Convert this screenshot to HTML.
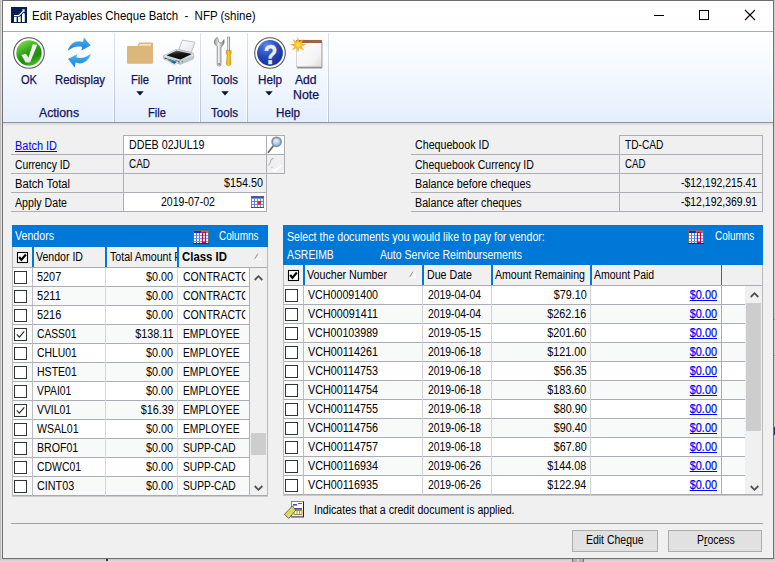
<!DOCTYPE html>
<html lang="en"><head><meta charset="utf-8"><title>Edit Payables Cheque Batch - NFP (shine)</title>
<style>

html,body{margin:0;padding:0;}
body{width:775px;height:562px;overflow:hidden;background:#e4e4e4;font-family:"Liberation Sans",sans-serif;}
#win{position:absolute;left:0;top:0;width:775px;height:562px;overflow:hidden;}
#win div{position:absolute;box-sizing:border-box;}
#win svg{position:absolute;overflow:visible;}
.t{position:absolute;white-space:pre;line-height:1.15;display:block;}

</style></head>
<body>
<div id="win">
<div style="left:0px;top:0px;width:1px;height:562px;background:#bdbdbd;"></div>
<div style="left:1px;top:0px;width:1px;height:562px;background:#e2e2e2;"></div>
<div style="left:774px;top:0px;width:1px;height:562px;background:#cfcfcf;"></div>
<div style="left:0px;top:559px;width:775px;height:3px;background:linear-gradient(180deg,#c4c4c4,#e2e2e2);"></div>
<div style="left:572px;top:559px;width:12px;height:3px;background:#b2b2b2;border-left:1px solid #747474;border-right:1px solid #747474;"></div>
<div style="left:577px;top:559px;width:2px;height:3px;background:#cfcfcf;"></div>
<div style="left:106px;top:559px;width:2px;height:2px;background:#303040;"></div>
<div style="left:774px;top:319px;width:1px;height:1px;background:#9a9a9a;"></div>
<div style="left:774px;top:355px;width:1px;height:1px;background:#9a9a9a;"></div>
<div style="left:774px;top:427px;width:1px;height:8px;background:#3a2060;"></div>
<div style="left:2px;top:0px;width:772px;height:559px;background:#f0f0f0;border:1px solid #6f6f6f;"></div>
<div style="left:3px;top:1px;width:770px;height:30px;background:#ffffff;"></div>
<div style="left:3px;top:31px;width:770px;height:1px;background:#a7abb3;"></div>
<div style="left:3px;top:32px;width:769px;height:90px;background:linear-gradient(180deg,#ffffff 0%,#f6faff 38%,#e4effc 100%);"></div>
<div style="left:772px;top:32px;width:1px;height:90px;background:#ffffff;"></div>
<div style="left:3px;top:122px;width:770px;height:1px;background:#8e949f;"></div>
<div style="left:3px;top:123px;width:770px;height:3px;background:linear-gradient(180deg,#d9d9d9,#f0f0f0);"></div>
<div style="left:113px;top:33px;width:1px;height:89px;background:rgba(255,255,255,.8);"></div>
<div style="left:114px;top:33px;width:1px;height:89px;background:linear-gradient(180deg,#dfe5ee,#b9c4d2);"></div>
<div style="left:199px;top:33px;width:1px;height:89px;background:rgba(255,255,255,.8);"></div>
<div style="left:200px;top:33px;width:1px;height:89px;background:linear-gradient(180deg,#dfe5ee,#b9c4d2);"></div>
<div style="left:246px;top:33px;width:1px;height:89px;background:rgba(255,255,255,.8);"></div>
<div style="left:247px;top:33px;width:1px;height:89px;background:linear-gradient(180deg,#dfe5ee,#b9c4d2);"></div>
<div style="left:327px;top:33px;width:1px;height:89px;background:rgba(255,255,255,.8);"></div>
<div style="left:328px;top:33px;width:1px;height:89px;background:linear-gradient(180deg,#dfe5ee,#b9c4d2);"></div>
<svg style="left:135.5px;top:91px" width="8" height="5" viewBox="0 0 8 5"><path d="M0.3 0.2 L7.7 0.2 L4 4.4 Z" fill="#0e0e3a"/></svg>
<svg style="left:220.5px;top:91px" width="8" height="5" viewBox="0 0 8 5"><path d="M0.3 0.2 L7.7 0.2 L4 4.4 Z" fill="#0e0e3a"/></svg>
<svg style="left:265px;top:91px" width="8" height="5" viewBox="0 0 8 5"><path d="M0.3 0.2 L7.7 0.2 L4 4.4 Z" fill="#0e0e3a"/></svg>
<div style="left:123px;top:135px;width:144px;height:20px;background:#ffffff;"></div>
<div style="left:123px;top:192px;width:144px;height:20px;background:#ffffff;"></div>
<div style="left:267px;top:135px;width:17px;height:19px;background:#ffffff;"></div>
<div style="left:123px;top:135px;width:162px;height:1px;background:#adadb4;"></div>
<div style="left:11px;top:154px;width:274px;height:1px;background:#adadb4;"></div>
<div style="left:11px;top:173px;width:274px;height:1px;background:#adadb4;"></div>
<div style="left:11px;top:192px;width:256px;height:1px;background:#adadb4;"></div>
<div style="left:11px;top:211px;width:256px;height:1px;background:#adadb4;"></div>
<div style="left:123px;top:135px;width:1px;height:77px;background:#adadb4;"></div>
<div style="left:266px;top:135px;width:1px;height:77px;background:#adadb4;"></div>
<div style="left:284px;top:135px;width:1px;height:39px;background:#adadb4;"></div>
<div style="left:619px;top:135px;width:144px;height:1px;background:#adadb4;"></div>
<div style="left:411px;top:154px;width:352px;height:1px;background:#adadb4;"></div>
<div style="left:411px;top:173px;width:352px;height:1px;background:#adadb4;"></div>
<div style="left:411px;top:192px;width:352px;height:1px;background:#adadb4;"></div>
<div style="left:411px;top:211px;width:352px;height:1px;background:#adadb4;"></div>
<div style="left:619px;top:135px;width:1px;height:77px;background:#adadb4;"></div>
<div style="left:762px;top:135px;width:1px;height:77px;background:#adadb4;"></div>
<div style="left:12px;top:225px;width:256px;height:22px;background:#0078d7;"></div>
<div style="left:12px;top:247px;width:256px;height:20px;background:#f0f0f0;"></div>
<svg style="left:193px;top:230px" width="16" height="14" viewBox="0 0 16 14">
<rect x="0" y="0" width="16" height="14" fill="#6a6a6a"/>
<rect x="1" y="1" width="14" height="12" fill="#ffffff"/>
<rect x="1" y="1" width="7" height="2" fill="#1030d0"/>
<rect x="8" y="1" width="7" height="2" fill="#808080"/>
<g stroke="#3f6fe0" stroke-width="1">
<path d="M3.5 3V13M6.5 3V13M9.5 3V13M12.5 3V13" />
<path d="M1 5.5H15M1 8.5H15M1 11.5H15" stroke="#6f9af0"/>
</g>
<rect x="9.5" y="2.5" width="3" height="10" fill="none" stroke="#d4004c" stroke-width="1.2"/>
<rect x="0" y="13" width="16" height="1" fill="#303030"/>
</svg>
<div style="left:12px;top:268px;width:237px;height:18px;background:#ffffff;"></div>
<div style="left:12px;top:267px;width:238px;height:1px;background:#acacb6;"></div>
<svg style="left:14px;top:271px" width="13" height="13" viewBox="0 0 13 13"><rect x="0.5" y="0.5" width="12" height="12" fill="#fff" stroke="#333" stroke-width="1"/></svg>
<div style="left:12px;top:287px;width:237px;height:18px;background:#f8f9f9;"></div>
<div style="left:12px;top:286px;width:238px;height:1px;background:#acacb6;"></div>
<svg style="left:14px;top:290px" width="13" height="13" viewBox="0 0 13 13"><rect x="0.5" y="0.5" width="12" height="12" fill="#fff" stroke="#333" stroke-width="1"/></svg>
<div style="left:12px;top:306px;width:237px;height:18px;background:#ffffff;"></div>
<div style="left:12px;top:305px;width:238px;height:1px;background:#acacb6;"></div>
<svg style="left:14px;top:309px" width="13" height="13" viewBox="0 0 13 13"><rect x="0.5" y="0.5" width="12" height="12" fill="#fff" stroke="#333" stroke-width="1"/></svg>
<div style="left:12px;top:325px;width:237px;height:18px;background:#f8f9f9;"></div>
<div style="left:12px;top:324px;width:238px;height:1px;background:#acacb6;"></div>
<svg style="left:14px;top:328px" width="13" height="13" viewBox="0 0 13 13"><rect x="0.5" y="0.5" width="12" height="12" fill="#fff" stroke="#333" stroke-width="1"/><path d="M2.8 6.4 L5.3 9.2 L10.3 3.4" fill="none" stroke="#222" stroke-width="1.1"/></svg>
<div style="left:12px;top:344px;width:237px;height:18px;background:#ffffff;"></div>
<div style="left:12px;top:343px;width:238px;height:1px;background:#acacb6;"></div>
<svg style="left:14px;top:347px" width="13" height="13" viewBox="0 0 13 13"><rect x="0.5" y="0.5" width="12" height="12" fill="#fff" stroke="#333" stroke-width="1"/></svg>
<div style="left:12px;top:363px;width:237px;height:18px;background:#f8f9f9;"></div>
<div style="left:12px;top:362px;width:238px;height:1px;background:#acacb6;"></div>
<svg style="left:14px;top:366px" width="13" height="13" viewBox="0 0 13 13"><rect x="0.5" y="0.5" width="12" height="12" fill="#fff" stroke="#333" stroke-width="1"/></svg>
<div style="left:12px;top:382px;width:237px;height:18px;background:#ffffff;"></div>
<div style="left:12px;top:381px;width:238px;height:1px;background:#acacb6;"></div>
<svg style="left:14px;top:385px" width="13" height="13" viewBox="0 0 13 13"><rect x="0.5" y="0.5" width="12" height="12" fill="#fff" stroke="#333" stroke-width="1"/></svg>
<div style="left:12px;top:401px;width:237px;height:18px;background:#f8f9f9;"></div>
<div style="left:12px;top:400px;width:238px;height:1px;background:#acacb6;"></div>
<svg style="left:14px;top:404px" width="13" height="13" viewBox="0 0 13 13"><rect x="0.5" y="0.5" width="12" height="12" fill="#fff" stroke="#333" stroke-width="1"/><path d="M2.8 6.4 L5.3 9.2 L10.3 3.4" fill="none" stroke="#222" stroke-width="1.1"/></svg>
<div style="left:12px;top:420px;width:237px;height:18px;background:#ffffff;"></div>
<div style="left:12px;top:419px;width:238px;height:1px;background:#acacb6;"></div>
<svg style="left:14px;top:423px" width="13" height="13" viewBox="0 0 13 13"><rect x="0.5" y="0.5" width="12" height="12" fill="#fff" stroke="#333" stroke-width="1"/></svg>
<div style="left:12px;top:439px;width:237px;height:18px;background:#f8f9f9;"></div>
<div style="left:12px;top:438px;width:238px;height:1px;background:#acacb6;"></div>
<svg style="left:14px;top:442px" width="13" height="13" viewBox="0 0 13 13"><rect x="0.5" y="0.5" width="12" height="12" fill="#fff" stroke="#333" stroke-width="1"/></svg>
<div style="left:12px;top:458px;width:237px;height:18px;background:#ffffff;"></div>
<div style="left:12px;top:457px;width:238px;height:1px;background:#acacb6;"></div>
<svg style="left:14px;top:461px" width="13" height="13" viewBox="0 0 13 13"><rect x="0.5" y="0.5" width="12" height="12" fill="#fff" stroke="#333" stroke-width="1"/></svg>
<div style="left:12px;top:477px;width:237px;height:18px;background:#f8f9f9;"></div>
<div style="left:12px;top:476px;width:238px;height:1px;background:#acacb6;"></div>
<svg style="left:14px;top:480px" width="13" height="13" viewBox="0 0 13 13"><rect x="0.5" y="0.5" width="12" height="12" fill="#fff" stroke="#333" stroke-width="1"/></svg>
<div style="left:12px;top:495px;width:256px;height:1px;background:#a9a9b0;"></div>
<div style="left:12px;top:496px;width:256px;height:1px;background:#c9c9ce;"></div>
<div style="left:12px;top:247px;width:1px;height:249px;background:#b9b9be;"></div>
<div style="left:32px;top:267px;width:1px;height:229px;background:#bcbcc2;"></div>
<div style="left:105px;top:267px;width:1px;height:229px;background:#d6d6da;"></div>
<div style="left:177px;top:267px;width:1px;height:229px;background:#d6d6da;"></div>
<div style="left:249px;top:267px;width:1px;height:229px;background:#b0b0b6;"></div>
<div style="left:267px;top:247px;width:1px;height:249px;background:#b9b9be;"></div>
<div style="left:12px;top:267px;width:256px;height:1px;background:#acacb6;"></div>
<div style="left:32px;top:247px;width:2px;height:20px;background:#0078d7;"></div>
<div style="left:105px;top:247px;width:2px;height:20px;background:#0078d7;"></div>
<div style="left:177px;top:247px;width:2px;height:20px;background:#0078d7;"></div>
<svg style="left:17px;top:252px" width="11" height="11" viewBox="0 0 11 11"><rect x="0.5" y="0.5" width="10" height="10" fill="#fff" stroke="#000" stroke-width="1.1"/><path d="M2.1 5 L4.4 7.7 L8.9 2.5" fill="none" stroke="#000" stroke-width="2.2"/></svg>
<svg style="left:254px;top:253px" width="8" height="7" viewBox="0 0 9 8"><path d="M0.6 7.2 L4.4 0.6" stroke="#8c8c8c" stroke-width="1.1" fill="none"/><path d="M4.4 0.6 L8.2 7.2 L0.6 7.2" stroke="#ffffff" stroke-width="1.1" fill="none"/></svg>
<div style="left:250px;top:268px;width:17px;height:227px;background:#f0f0f0;"></div>
<svg style="left:254px;top:275px" width="9" height="6" viewBox="0 0 9 6"><path d="M0.7 5 L4.5 1.2 L8.3 5" stroke="#505050" stroke-width="1.8" fill="none"/></svg>
<svg style="left:254px;top:485px" width="9" height="6" viewBox="0 0 9 6"><path d="M0.7 1 L4.5 4.8 L8.3 1" stroke="#505050" stroke-width="1.8" fill="none"/></svg>
<div style="left:251px;top:433px;width:15px;height:22px;background:#cdcdcd;"></div>
<div style="left:283px;top:225px;width:480px;height:40px;background:#0078d7;"></div>
<div style="left:283px;top:265px;width:480px;height:20px;background:#f0f0f0;"></div>
<svg style="left:688px;top:230px" width="16" height="14" viewBox="0 0 16 14">
<rect x="0" y="0" width="16" height="14" fill="#6a6a6a"/>
<rect x="1" y="1" width="14" height="12" fill="#ffffff"/>
<rect x="1" y="1" width="7" height="2" fill="#1030d0"/>
<rect x="8" y="1" width="7" height="2" fill="#808080"/>
<g stroke="#3f6fe0" stroke-width="1">
<path d="M3.5 3V13M6.5 3V13M9.5 3V13M12.5 3V13" />
<path d="M1 5.5H15M1 8.5H15M1 11.5H15" stroke="#6f9af0"/>
</g>
<rect x="9.5" y="2.5" width="3" height="10" fill="none" stroke="#d4004c" stroke-width="1.2"/>
<rect x="0" y="13" width="16" height="1" fill="#303030"/>
</svg>
<div style="left:283px;top:286px;width:462px;height:18px;background:#ffffff;"></div>
<div style="left:283px;top:285px;width:462px;height:1px;background:#acacb6;"></div>
<svg style="left:285px;top:289px" width="13" height="13" viewBox="0 0 13 13"><rect x="0.5" y="0.5" width="12" height="12" fill="#fff" stroke="#333" stroke-width="1"/></svg>
<div style="left:283px;top:305px;width:462px;height:18px;background:#f8f9f9;"></div>
<div style="left:283px;top:304px;width:462px;height:1px;background:#acacb6;"></div>
<svg style="left:285px;top:308px" width="13" height="13" viewBox="0 0 13 13"><rect x="0.5" y="0.5" width="12" height="12" fill="#fff" stroke="#333" stroke-width="1"/></svg>
<div style="left:283px;top:324px;width:462px;height:18px;background:#ffffff;"></div>
<div style="left:283px;top:323px;width:462px;height:1px;background:#acacb6;"></div>
<svg style="left:285px;top:327px" width="13" height="13" viewBox="0 0 13 13"><rect x="0.5" y="0.5" width="12" height="12" fill="#fff" stroke="#333" stroke-width="1"/></svg>
<div style="left:283px;top:343px;width:462px;height:18px;background:#f8f9f9;"></div>
<div style="left:283px;top:342px;width:462px;height:1px;background:#acacb6;"></div>
<svg style="left:285px;top:346px" width="13" height="13" viewBox="0 0 13 13"><rect x="0.5" y="0.5" width="12" height="12" fill="#fff" stroke="#333" stroke-width="1"/></svg>
<div style="left:283px;top:362px;width:462px;height:18px;background:#ffffff;"></div>
<div style="left:283px;top:361px;width:462px;height:1px;background:#acacb6;"></div>
<svg style="left:285px;top:365px" width="13" height="13" viewBox="0 0 13 13"><rect x="0.5" y="0.5" width="12" height="12" fill="#fff" stroke="#333" stroke-width="1"/></svg>
<div style="left:283px;top:381px;width:462px;height:18px;background:#f8f9f9;"></div>
<div style="left:283px;top:380px;width:462px;height:1px;background:#acacb6;"></div>
<svg style="left:285px;top:384px" width="13" height="13" viewBox="0 0 13 13"><rect x="0.5" y="0.5" width="12" height="12" fill="#fff" stroke="#333" stroke-width="1"/></svg>
<div style="left:283px;top:400px;width:462px;height:18px;background:#ffffff;"></div>
<div style="left:283px;top:399px;width:462px;height:1px;background:#acacb6;"></div>
<svg style="left:285px;top:403px" width="13" height="13" viewBox="0 0 13 13"><rect x="0.5" y="0.5" width="12" height="12" fill="#fff" stroke="#333" stroke-width="1"/></svg>
<div style="left:283px;top:419px;width:462px;height:18px;background:#f8f9f9;"></div>
<div style="left:283px;top:418px;width:462px;height:1px;background:#acacb6;"></div>
<svg style="left:285px;top:422px" width="13" height="13" viewBox="0 0 13 13"><rect x="0.5" y="0.5" width="12" height="12" fill="#fff" stroke="#333" stroke-width="1"/></svg>
<div style="left:283px;top:438px;width:462px;height:18px;background:#ffffff;"></div>
<div style="left:283px;top:437px;width:462px;height:1px;background:#acacb6;"></div>
<svg style="left:285px;top:441px" width="13" height="13" viewBox="0 0 13 13"><rect x="0.5" y="0.5" width="12" height="12" fill="#fff" stroke="#333" stroke-width="1"/></svg>
<div style="left:283px;top:457px;width:462px;height:18px;background:#f8f9f9;"></div>
<div style="left:283px;top:456px;width:462px;height:1px;background:#acacb6;"></div>
<svg style="left:285px;top:460px" width="13" height="13" viewBox="0 0 13 13"><rect x="0.5" y="0.5" width="12" height="12" fill="#fff" stroke="#333" stroke-width="1"/></svg>
<div style="left:283px;top:476px;width:462px;height:18px;background:#ffffff;"></div>
<div style="left:283px;top:475px;width:462px;height:1px;background:#acacb6;"></div>
<svg style="left:285px;top:479px" width="13" height="13" viewBox="0 0 13 13"><rect x="0.5" y="0.5" width="12" height="12" fill="#fff" stroke="#333" stroke-width="1"/></svg>
<div style="left:283px;top:494px;width:480px;height:1px;background:#a9a9b0;"></div>
<div style="left:283px;top:495px;width:480px;height:1px;background:#c9c9ce;"></div>
<div style="left:283px;top:265px;width:1px;height:230px;background:#b9b9be;"></div>
<div style="left:303px;top:285px;width:1px;height:210px;background:#bcbcc2;"></div>
<div style="left:422px;top:285px;width:1px;height:210px;background:#d0d0d5;"></div>
<div style="left:491px;top:285px;width:1px;height:210px;background:#d0d0d5;"></div>
<div style="left:590px;top:285px;width:1px;height:210px;background:#d0d0d5;"></div>
<div style="left:721px;top:285px;width:1px;height:210px;background:#acacb6;"></div>
<div style="left:762px;top:265px;width:1px;height:230px;background:#b9b9be;"></div>
<div style="left:283px;top:285px;width:480px;height:1px;background:#acacb6;"></div>
<div style="left:303px;top:265px;width:2px;height:20px;background:#0078d7;"></div>
<div style="left:422px;top:265px;width:2px;height:20px;background:#0078d7;"></div>
<div style="left:491px;top:265px;width:2px;height:20px;background:#0078d7;"></div>
<div style="left:590px;top:265px;width:2px;height:20px;background:#0078d7;"></div>
<div style="left:721px;top:265px;width:1px;height:20px;background:#0078d7;"></div>
<svg style="left:288px;top:270px" width="11" height="11" viewBox="0 0 11 11"><rect x="0.5" y="0.5" width="10" height="10" fill="#fff" stroke="#000" stroke-width="1.1"/><path d="M2.1 5 L4.4 7.7 L8.9 2.5" fill="none" stroke="#000" stroke-width="2.2"/></svg>
<svg style="left:409px;top:271px" width="8" height="7" viewBox="0 0 9 8"><path d="M0.6 7.2 L4.4 0.6" stroke="#8c8c8c" stroke-width="1.1" fill="none"/><path d="M4.4 0.6 L8.2 7.2 L0.6 7.2" stroke="#ffffff" stroke-width="1.1" fill="none"/></svg>
<div style="left:746px;top:286px;width:16px;height:208px;background:#f0f0f0;"></div>
<svg style="left:750px;top:292px" width="9" height="6" viewBox="0 0 9 6"><path d="M0.7 5 L4.5 1.2 L8.3 5" stroke="#505050" stroke-width="1.8" fill="none"/></svg>
<svg style="left:750px;top:485px" width="9" height="6" viewBox="0 0 9 6"><path d="M0.7 1 L4.5 4.8 L8.3 1" stroke="#505050" stroke-width="1.8" fill="none"/></svg>
<div style="left:746px;top:303px;width:15px;height:128px;background:#cdcdcd;"></div>
<div style="left:11px;top:523px;width:752px;height:1px;background:#a0a0a0;"></div>
<div style="left:572px;top:530px;width:86px;height:22px;background:#e1e1e1;border:1px solid #adadad;"></div>
<div style="left:668px;top:530px;width:94px;height:22px;background:#e1e1e1;border:1px solid #adadad;"></div>
<svg style="left:11px;top:7px" width="16" height="16" viewBox="0 0 16 16">
<rect width="16" height="16" fill="#002050"/>
<rect x="3" y="9.8" width="2.6" height="5.2" fill="#fff"/>
<rect x="7" y="9" width="2.7" height="6" fill="#fff"/>
<rect x="11" y="5" width="2.8" height="10" fill="#fff"/>
<path d="M3 8.6 H7.7 L13 3.3" fill="none" stroke="#002050" stroke-width="3"/>
<path d="M10.2 2 L14.2 1.8 L14 5.8 Z" fill="#002050" stroke="#002050" stroke-width="1.4"/>
<path d="M3 8.6 H7.7 L12.8 3.5" fill="none" stroke="#fff" stroke-width="1.1"/>
<path d="M10.8 2.5 L13.7 2.3 L13.5 5.2 Z" fill="#fff"/>
</svg>
<svg style="left:650px;top:5px" width="110" height="22" viewBox="0 0 110 22">
<path d="M4 10.5 H14" stroke="#000" stroke-width="1"/>
<rect x="49.5" y="5.5" width="9" height="9" fill="none" stroke="#000" stroke-width="1"/>
<path d="M95 5 L105 15 M105 5 L95 15" stroke="#000" stroke-width="1.1"/>
</svg>
<svg style="left:13px;top:37px" width="32" height="32" viewBox="0 0 32 32">
<defs>
<linearGradient id="gok" x1="0.2" y1="0" x2="0.75" y2="1"><stop offset="0" stop-color="#7ede50"/><stop offset="0.5" stop-color="#2a9a12"/><stop offset="0.72" stop-color="#1f8c0c"/><stop offset="1" stop-color="#4fd024"/></linearGradient>
<linearGradient id="gck" x1="0" y1="0" x2="0" y2="1"><stop offset="0" stop-color="#ffffff"/><stop offset="1" stop-color="#e4e4e4"/></linearGradient>
</defs>
<circle cx="16" cy="16" r="15.3" fill="#fff" stroke="#555" stroke-width="1.1"/>
<circle cx="16" cy="16" r="12.7" fill="url(#gok)"/>
<path d="M8.4 18 L13 16.8 L15.4 20.8 L19.8 7.2 L24.2 7.8 L17.2 25.4 L12.6 25.4 Z" fill="url(#gck)"/>
</svg>
<svg style="left:67px;top:37px" width="25" height="32" viewBox="0 0 25 32">
<defs><linearGradient id="grd" x1="0" y1="0" x2="0" y2="1"><stop offset="0" stop-color="#55b4f2"/><stop offset="1" stop-color="#1580d8"/></linearGradient></defs>
<path d="M0.8 13.8 C3 5.5 10.5 2.6 16 5 L16.8 0.2 L23.6 8.6 L14.4 13.4 L15.2 10 C10.5 8.8 5.5 10 0.8 13.8 Z" fill="url(#grd)"/>
<path d="M23.8 16.8 C21.6 25.1 14.1 28 8.6 25.6 L7.8 30.4 L1 22 L10.2 17.2 L9.4 20.6 C14.1 21.8 19.1 20.6 23.8 16.8 Z" fill="url(#grd)"/>
</svg>
<svg style="left:127px;top:42px" width="26" height="22" viewBox="0 0 26 22">
<path d="M0.6 4 H10.4 L12 0.5 H25.4 Q26 0.5 26 1.2 V21 Q26 21.8 25.3 21.8 H0.7 Q0 21.8 0 21 V4.6 Q0 4 0.6 4 Z" fill="#dcb67a"/>
<path d="M12.4 2.2 H24 V3.4 H11.8 Z" fill="#fdf6ea"/>
</svg>
<svg style="left:163px;top:39px" width="33" height="27" viewBox="0 0 33 27">
<defs>
<linearGradient id="gp1" x1="0" y1="0" x2="1" y2="1"><stop offset="0" stop-color="#ffffff"/><stop offset="1" stop-color="#dfe3e7"/></linearGradient>
<linearGradient id="gp2" x1="0" y1="0" x2="0.3" y2="1"><stop offset="0" stop-color="#7c8186"/><stop offset="0.45" stop-color="#1a1c1e"/><stop offset="1" stop-color="#000"/></linearGradient>
<linearGradient id="gp3" x1="0" y1="0" x2="1" y2="0.4"><stop offset="0" stop-color="#3b8df0"/><stop offset="0.5" stop-color="#2f9a78"/><stop offset="1" stop-color="#1c48b8"/></linearGradient>
<linearGradient id="gp4" x1="0" y1="0" x2="0" y2="1"><stop offset="0" stop-color="#f8f9fa"/><stop offset="1" stop-color="#b9bec4"/></linearGradient>
</defs>
<path d="M19.4 1.2 L32 3.2 L28.2 13.8 L15.8 10.4 Z" fill="url(#gp1)" stroke="#a4aab0" stroke-width="0.7"/>
<path d="M0.2 17 L13 10.4 L30.2 14 L30.9 17.2 L30.2 19.9 L17.4 25.2 L1.2 20.5 Z" fill="url(#gp4)" stroke="#9aa0a6" stroke-width="0.6"/>
<path d="M3.6 16.5 L13.4 11.4 L28.9 14.9 L17.4 20.5 Z" fill="url(#gp2)"/>
<path d="M17.4 21.6 L30.8 16.8 L30.2 19.9 L17.4 25.2 Z" fill="#c3c8cd"/>
<path d="M1.6 18.5 L16.4 22.3 L16.4 24 L1.8 20 Z" fill="#33383d"/>
<path d="M1.8 20.4 L6.6 18.9 L16 23.2 L11.4 26.2 Z" fill="#f4f6f8" stroke="#b4b9be" stroke-width="0.5"/>
<path d="M3.6 20.6 L6.8 19.7 L14 23.1 L11.2 24.9 Z" fill="url(#gp3)"/>
<circle cx="19.4" cy="22.6" r="0.8" fill="#4cb848"/>
</svg>
<svg style="left:213px;top:36px" width="20" height="32" viewBox="0 0 20 32">
<defs>
<linearGradient id="gw" x1="0" y1="0" x2="1" y2="0"><stop offset="0" stop-color="#8a8a8a"/><stop offset="0.45" stop-color="#f2f2f2"/><stop offset="1" stop-color="#777"/></linearGradient>
<linearGradient id="gh" x1="0" y1="0" x2="1" y2="0"><stop offset="0" stop-color="#c98a00"/><stop offset="0.4" stop-color="#ffd21a"/><stop offset="1" stop-color="#d89a00"/></linearGradient>
</defs>
<path d="M4.2 1.4 C2 2.6 0.8 5 1.4 7.6 L4.2 10.6 L4.2 28.4 C4.2 30.6 8 30.6 8 28.4 L8 10.8 C10.6 9.4 11.6 6.6 11 3.6 L8.4 7.2 L5.6 6 L5.2 3.2 Z" fill="url(#gw)" stroke="#6a6a6a" stroke-width="0.6"/>
<circle cx="6.1" cy="28" r="0.9" fill="#707070"/>
<rect x="14.6" y="1" width="2.2" height="14" fill="url(#gw)" stroke="#777" stroke-width="0.4"/>
<path d="M13.2 14.6 H18.2 V17.6 L17.3 19 L18 27.6 C18 30.4 13.4 30.4 13.4 27.6 L14.1 19 L13.2 17.6 Z" fill="url(#gh)" stroke="#b87c00" stroke-width="0.4"/>
</svg>
<svg style="left:254px;top:37px" width="32" height="32" viewBox="0 0 32 32">
<defs><radialGradient id="ghl" cx="0.35" cy="0.2" r="0.95"><stop offset="0" stop-color="#5b84e6"/><stop offset="0.5" stop-color="#2446b8"/><stop offset="1" stop-color="#122a8c"/></radialGradient></defs>
<circle cx="16" cy="16" r="15.3" fill="#fff" stroke="#555" stroke-width="1.1"/>
<circle cx="16" cy="16" r="12.9" fill="url(#ghl)"/>
<text transform="translate(16.5,26.6) scale(0.78,1)" x="0" y="0" text-anchor="middle" font-family="Liberation Sans, sans-serif" font-weight="bold" font-size="28.5" fill="#eeeeee" stroke="#eeeeee" stroke-width="0.5">?</text>
</svg>
<svg style="left:290px;top:37px" width="33" height="32" viewBox="0 0 33 32">
<defs>
<linearGradient id="gn" x1="0" y1="0" x2="1" y2="1"><stop offset="0" stop-color="#ffffff"/><stop offset="0.7" stop-color="#f4f4f4"/><stop offset="1" stop-color="#dcdcdc"/></linearGradient>
<radialGradient id="gs" cx="0.5" cy="0.5" r="0.5"><stop offset="0" stop-color="#ffe680"/><stop offset="0.45" stop-color="#fdb813"/><stop offset="1" stop-color="#f59a00"/></radialGradient>
</defs>
<rect x="7" y="4" width="25.4" height="27.6" rx="1" fill="#8f8f8f"/>
<rect x="6.6" y="3.2" width="25" height="26.6" fill="url(#gn)" stroke="#b9b9b9" stroke-width="0.6"/>
<path d="M6.4 3 H31.2 Q32 3 32 4 V6 H6.4 Z" fill="#9c6248"/>
<path d="M8 0 L9.3 4.9 L13.4 2 L11.4 6.6 L16.2 7.4 L11.6 9.2 L13.8 13.6 L9.4 10.8 L8 15.6 L6.6 10.8 L2.2 13.6 L4.4 9.2 L-0.2 7.4 L4.6 6.6 L2.6 2 L6.7 4.9 Z" fill="url(#gs)"/>
</svg>
<svg style="left:267px;top:136px" width="17" height="18" viewBox="0 0 17 18">
<defs><radialGradient id="gm" cx="0.4" cy="0.35" r="0.7"><stop offset="0" stop-color="#e8f4ff"/><stop offset="1" stop-color="#7db4e8"/></radialGradient></defs>
<path d="M1.4 16.2 L6.4 9.8" stroke="#6a6a6a" stroke-width="1.8" stroke-linecap="round"/>
<circle cx="9.6" cy="5.8" r="4.5" fill="url(#gm)" stroke="#8a9098" stroke-width="1.7"/>
</svg>
<svg style="left:267px;top:155px" width="17" height="18" viewBox="0 0 17 18">
<path d="M6.6 3.4 C4 3.6 3.6 6 3.4 7.4 C2.4 8 1.6 9 1.8 10.8" fill="none" stroke="#b4b4b4" stroke-width="1.1"/>
<path d="M5.4 14.6 L8 15.6 L14.4 10.6" fill="none" stroke="#ffffff" stroke-width="1.4"/>
<circle cx="5" cy="12.4" r="0.6" fill="#aaa"/>
</svg>
<svg style="left:251px;top:196px" width="13" height="12" viewBox="0 0 13 12">
<rect width="13" height="12" fill="#ffffff"/>
<rect width="13" height="2.6" fill="#4456b4"/>
<g stroke="#6c7fd6" stroke-width="1"><path d="M0.5 2V12M3.5 2V12M6.5 2V12M9.5 2V12M12.5 2V12"/><path d="M0 5.5H13M0 8.5H13M0 11.5H13"/></g>
<rect x="6.8" y="5" width="3" height="3.4" fill="#e03010"/>
<rect x="0" y="11" width="13" height="1" fill="#3a4aa0"/>
</svg>
<svg style="left:284px;top:500px" width="21" height="19" viewBox="0 0 21 19">
<rect x="7.5" y="1.5" width="12" height="15.4" fill="#fffff2" stroke="#2a1060" stroke-width="1"/>
<path d="M7.5 17 V1.5 H19.5" fill="none" stroke="#888" stroke-width="1"/>
<rect x="9" y="4" width="4" height="1.6" fill="#4848d0"/>
<rect x="14" y="3" width="4" height="0.9" fill="#4848d0"/>
<rect x="9" y="8" width="9" height="1.8" fill="#4848d0"/>
<rect x="10" y="10.4" width="8" height="4" fill="#fff" stroke="#8a8a20" stroke-width="0.9"/>
<path d="M13 10.4V14.4M15.6 10.4V14.4" stroke="#8a8a20" stroke-width="0.9"/>
<path d="M11 15.6 H18.4 V10" fill="none" stroke="#f0e800" stroke-width="1" stroke-dasharray="1.2 1"/>
<path d="M0.4 14.4 L8.6 5.8 L11.6 10.4 L4.8 18.4 Z" fill="#dede6a" stroke="#3a3a1a" stroke-width="0.7"/>
<path d="M3.4 14.6 L9.2 8.4" stroke="#9a9ab8" stroke-width="0.8" stroke-dasharray="1 1"/>
</svg>
<span class="t" id="t0" style="top:74.00px;font-size:12px;color:#12125c;left:21.00px;transform-origin:0 50%;transform:scaleX(0.9225);-webkit-text-stroke:0.25px #12125c;">OK</span>
<span class="t" id="t1" style="top:74.00px;font-size:12px;color:#12125c;left:55.00px;transform-origin:0 50%;transform:scaleX(0.9487);-webkit-text-stroke:0.25px #12125c;">Redisplay</span>
<span class="t" id="t2" style="top:74.00px;font-size:12px;color:#12125c;left:131.00px;transform-origin:0 50%;transform:scaleX(0.9305);-webkit-text-stroke:0.25px #12125c;">File</span>
<span class="t" id="t3" style="top:74.00px;font-size:12px;color:#12125c;left:166.60px;transform-origin:0 50%;transform:scaleX(0.9884);-webkit-text-stroke:0.25px #12125c;">Print</span>
<span class="t" id="t4" style="top:74.00px;font-size:12px;color:#12125c;left:211.00px;transform-origin:0 50%;transform:scaleX(0.9637);-webkit-text-stroke:0.25px #12125c;">Tools</span>
<span class="t" id="t5" style="top:74.00px;font-size:12px;color:#12125c;left:257.60px;transform-origin:0 50%;transform:scaleX(0.9722);-webkit-text-stroke:0.25px #12125c;">Help</span>
<span class="t" id="t6" style="top:74.00px;font-size:12px;color:#12125c;left:295.00px;transform-origin:0 50%;transform:scaleX(1.0113);-webkit-text-stroke:0.25px #12125c;">Add</span>
<span class="t" id="t7" style="top:88.60px;font-size:12px;color:#12125c;left:293.00px;transform-origin:0 50%;transform:scaleX(1.0253);-webkit-text-stroke:0.25px #12125c;">Note</span>
<span class="t" id="t8" style="top:106.60px;font-size:12px;color:#12125c;left:39.00px;transform-origin:0 50%;transform:scaleX(1.0163);-webkit-text-stroke:0.25px #12125c;">Actions</span>
<span class="t" id="t9" style="top:106.60px;font-size:12px;color:#12125c;left:148.00px;transform-origin:0 50%;transform:scaleX(0.9305);-webkit-text-stroke:0.25px #12125c;">File</span>
<span class="t" id="t10" style="top:106.60px;font-size:12px;color:#12125c;left:211.00px;transform-origin:0 50%;transform:scaleX(0.9637);-webkit-text-stroke:0.25px #12125c;">Tools</span>
<span class="t" id="t11" style="top:106.60px;font-size:12px;color:#12125c;left:275.60px;transform-origin:0 50%;transform:scaleX(0.9722);-webkit-text-stroke:0.25px #12125c;">Help</span>
<span class="t" id="t12" style="top:10.00px;font-size:12px;color:#000;left:32.40px;transform-origin:0 50%;transform:scaleX(0.9559);">Edit Payables Cheque Batch  -  NFP (shine)</span>
<span class="t" id="t13" style="top:140.00px;font-size:12px;color:#0000ff;text-decoration:underline;left:15.00px;transform-origin:0 50%;transform:scaleX(0.9124);">Batch ID</span>
<span class="t" id="t14" style="top:159.00px;font-size:12px;color:#000;left:15.00px;transform-origin:0 50%;transform:scaleX(0.8592);">Currency ID</span>
<span class="t" id="t15" style="top:177.80px;font-size:12px;color:#000;left:15.00px;transform-origin:0 50%;transform:scaleX(0.9297);">Batch Total</span>
<span class="t" id="t16" style="top:196.90px;font-size:12px;color:#000;left:15.00px;transform-origin:0 50%;transform:scaleX(0.8858);">Apply Date</span>
<span class="t" id="t17" style="top:139.00px;font-size:12px;color:#000;left:128.50px;transform-origin:0 50%;transform:scaleX(0.8912);">DDEB 02JUL19</span>
<span class="t" id="t18" style="top:158.00px;font-size:12px;color:#000;left:128.50px;transform-origin:0 50%;transform:scaleX(0.8247);">CAD</span>
<span class="t" id="t19" style="top:177.00px;font-size:12px;color:#000;left:223.70px;transform-origin:0 50%;transform:scaleX(0.8988);">$154.50</span>
<span class="t" id="t20" style="top:196.00px;font-size:12px;color:#000;left:160.50px;transform-origin:0 50%;transform:scaleX(0.8780);">2019-07-02</span>
<span class="t" id="t21" style="top:139.00px;font-size:12px;color:#000;left:415.40px;transform-origin:0 50%;transform:scaleX(0.8886);">Chequebook ID</span>
<span class="t" id="t22" style="top:158.60px;font-size:12px;color:#000;left:415.40px;transform-origin:0 50%;transform:scaleX(0.8781);">Chequebook Currency ID</span>
<span class="t" id="t23" style="top:177.80px;font-size:12px;color:#000;left:415.40px;transform-origin:0 50%;transform:scaleX(0.8946);">Balance before cheques</span>
<span class="t" id="t24" style="top:196.60px;font-size:12px;color:#000;left:415.40px;transform-origin:0 50%;transform:scaleX(0.8926);">Balance after cheques</span>
<span class="t" id="t25" style="top:139.00px;font-size:12px;color:#000;left:624.80px;transform-origin:0 50%;transform:scaleX(0.8472);">TD-CAD</span>
<span class="t" id="t26" style="top:158.00px;font-size:12px;color:#000;left:624.80px;transform-origin:0 50%;transform:scaleX(0.8049);">CAD</span>
<span class="t" id="t27" style="top:177.00px;font-size:12px;color:#000;left:680.80px;transform-origin:0 50%;transform:scaleX(0.8716);">-$12,192,215.41</span>
<span class="t" id="t28" style="top:196.00px;font-size:12px;color:#000;left:680.80px;transform-origin:0 50%;transform:scaleX(0.8716);">-$12,192,369.91</span>
<span class="t" id="t29" style="top:229.60px;font-size:12px;color:#fff;left:15.00px;transform-origin:0 50%;transform:scaleX(0.8854);">Vendors</span>
<span class="t" id="t30" style="top:229.60px;font-size:12px;color:#fff;left:219.40px;transform-origin:0 50%;transform:scaleX(0.8362);">Columns</span>
<span class="t" id="t31" style="top:270.50px;font-size:12px;color:#000;left:37.20px;transform-origin:0 50%;transform:scaleX(0.9063);">5207</span>
<span class="t" id="t32" style="top:270.50px;font-size:12px;color:#000;right:601.60px;transform-origin:100% 50%;transform:scaleX(0.9000);">$0.00</span>
<span class="t" id="t33" style="top:270.50px;font-size:12px;color:#000;left:182.60px;transform-origin:0 50%;transform:scaleX(0.8780);max-width:71.1px;overflow:hidden;">CONTRACTOR</span>
<span class="t" id="t34" style="top:289.50px;font-size:12px;color:#000;left:37.20px;transform-origin:0 50%;transform:scaleX(0.9220);">5211</span>
<span class="t" id="t35" style="top:289.50px;font-size:12px;color:#000;right:601.60px;transform-origin:100% 50%;transform:scaleX(0.9000);">$0.00</span>
<span class="t" id="t36" style="top:289.50px;font-size:12px;color:#000;left:182.60px;transform-origin:0 50%;transform:scaleX(0.8780);max-width:71.1px;overflow:hidden;">CONTRACTOR</span>
<span class="t" id="t37" style="top:308.50px;font-size:12px;color:#000;left:37.20px;transform-origin:0 50%;transform:scaleX(0.9063);">5216</span>
<span class="t" id="t38" style="top:308.50px;font-size:12px;color:#000;right:601.60px;transform-origin:100% 50%;transform:scaleX(0.9000);">$0.00</span>
<span class="t" id="t39" style="top:308.50px;font-size:12px;color:#000;left:182.60px;transform-origin:0 50%;transform:scaleX(0.8780);max-width:71.1px;overflow:hidden;">CONTRACTOR</span>
<span class="t" id="t40" style="top:327.50px;font-size:12px;color:#000;left:37.20px;transform-origin:0 50%;transform:scaleX(0.8559);">CASS01</span>
<span class="t" id="t41" style="top:327.50px;font-size:12px;color:#000;right:601.60px;transform-origin:100% 50%;transform:scaleX(0.9000);">$138.11</span>
<span class="t" id="t42" style="top:327.50px;font-size:12px;color:#000;left:182.60px;transform-origin:0 50%;transform:scaleX(0.8572);">EMPLOYEE</span>
<span class="t" id="t43" style="top:346.50px;font-size:12px;color:#000;left:37.20px;transform-origin:0 50%;transform:scaleX(0.8646);">CHLU01</span>
<span class="t" id="t44" style="top:346.50px;font-size:12px;color:#000;right:601.60px;transform-origin:100% 50%;transform:scaleX(0.9000);">$0.00</span>
<span class="t" id="t45" style="top:346.50px;font-size:12px;color:#000;left:182.60px;transform-origin:0 50%;transform:scaleX(0.8572);">EMPLOYEE</span>
<span class="t" id="t46" style="top:365.50px;font-size:12px;color:#000;left:37.20px;transform-origin:0 50%;transform:scaleX(0.8774);">HSTE01</span>
<span class="t" id="t47" style="top:365.50px;font-size:12px;color:#000;right:601.60px;transform-origin:100% 50%;transform:scaleX(0.9000);">$0.00</span>
<span class="t" id="t48" style="top:365.50px;font-size:12px;color:#000;left:182.60px;transform-origin:0 50%;transform:scaleX(0.8572);">EMPLOYEE</span>
<span class="t" id="t49" style="top:384.50px;font-size:12px;color:#000;left:37.20px;transform-origin:0 50%;transform:scaleX(0.8615);">VPAI01</span>
<span class="t" id="t50" style="top:384.50px;font-size:12px;color:#000;right:601.60px;transform-origin:100% 50%;transform:scaleX(0.9000);">$0.00</span>
<span class="t" id="t51" style="top:384.50px;font-size:12px;color:#000;left:182.60px;transform-origin:0 50%;transform:scaleX(0.8572);">EMPLOYEE</span>
<span class="t" id="t52" style="top:403.50px;font-size:12px;color:#000;left:37.20px;transform-origin:0 50%;transform:scaleX(0.8635);">VVIL01</span>
<span class="t" id="t53" style="top:403.50px;font-size:12px;color:#000;right:601.60px;transform-origin:100% 50%;transform:scaleX(0.9000);">$16.39</span>
<span class="t" id="t54" style="top:403.50px;font-size:12px;color:#000;left:182.60px;transform-origin:0 50%;transform:scaleX(0.8572);">EMPLOYEE</span>
<span class="t" id="t55" style="top:422.50px;font-size:12px;color:#000;left:37.20px;transform-origin:0 50%;transform:scaleX(0.8784);">WSAL01</span>
<span class="t" id="t56" style="top:422.50px;font-size:12px;color:#000;right:601.60px;transform-origin:100% 50%;transform:scaleX(0.9000);">$0.00</span>
<span class="t" id="t57" style="top:422.50px;font-size:12px;color:#000;left:182.60px;transform-origin:0 50%;transform:scaleX(0.8572);">EMPLOYEE</span>
<span class="t" id="t58" style="top:441.50px;font-size:12px;color:#000;left:37.20px;transform-origin:0 50%;transform:scaleX(0.8825);">BROF01</span>
<span class="t" id="t59" style="top:441.50px;font-size:12px;color:#000;right:601.60px;transform-origin:100% 50%;transform:scaleX(0.9000);">$0.00</span>
<span class="t" id="t60" style="top:441.50px;font-size:12px;color:#000;left:182.60px;transform-origin:0 50%;transform:scaleX(0.8482);">SUPP-CAD</span>
<span class="t" id="t61" style="top:460.50px;font-size:12px;color:#000;left:37.20px;transform-origin:0 50%;transform:scaleX(0.8703);">CDWC01</span>
<span class="t" id="t62" style="top:460.50px;font-size:12px;color:#000;right:601.60px;transform-origin:100% 50%;transform:scaleX(0.9000);">$0.00</span>
<span class="t" id="t63" style="top:460.50px;font-size:12px;color:#000;left:182.60px;transform-origin:0 50%;transform:scaleX(0.8482);">SUPP-CAD</span>
<span class="t" id="t64" style="top:479.50px;font-size:12px;color:#000;left:37.20px;transform-origin:0 50%;transform:scaleX(0.8998);">CINT03</span>
<span class="t" id="t65" style="top:479.50px;font-size:12px;color:#000;right:601.60px;transform-origin:100% 50%;transform:scaleX(0.9000);">$0.00</span>
<span class="t" id="t66" style="top:479.50px;font-size:12px;color:#000;left:182.60px;transform-origin:0 50%;transform:scaleX(0.8482);">SUPP-CAD</span>
<span class="t" id="t67" style="top:251.00px;font-size:12px;color:#000;left:36.00px;transform-origin:0 50%;transform:scaleX(0.8806);">Vendor ID</span>
<span class="t" id="t68" style="top:251.00px;font-size:12px;color:#000;left:110.00px;transform-origin:0 50%;transform:scaleX(0.8850);max-width:75.6px;overflow:hidden;">Total Amount Paid</span>
<span class="t" id="t69" style="top:251.00px;font-size:12px;color:#000;font-weight:bold;left:182.00px;transform-origin:0 50%;transform:scaleX(0.9502);">Class ID</span>
<span class="t" id="t70" style="top:230.60px;font-size:12px;color:#fff;left:286.60px;transform-origin:0 50%;transform:scaleX(0.8864);">Select the documents you would like to pay for vendor:</span>
<span class="t" id="t71" style="top:249.40px;font-size:12px;color:#fff;left:286.60px;transform-origin:0 50%;transform:scaleX(0.8664);">ASREIMB</span>
<span class="t" id="t72" style="top:249.40px;font-size:12px;color:#fff;left:380.00px;transform-origin:0 50%;transform:scaleX(0.8761);">Auto Service Reimbursements</span>
<span class="t" id="t73" style="top:229.80px;font-size:12px;color:#fff;left:714.70px;transform-origin:0 50%;transform:scaleX(0.8277);">Columns</span>
<span class="t" id="t74" style="top:288.50px;font-size:12px;color:#000;left:308.00px;transform-origin:0 50%;transform:scaleX(0.8891);">VCH00091400</span>
<span class="t" id="t75" style="top:288.50px;font-size:12px;color:#000;left:427.60px;transform-origin:0 50%;transform:scaleX(0.8633);">2019-04-04</span>
<span class="t" id="t76" style="top:288.50px;font-size:12px;color:#000;right:188.70px;transform-origin:100% 50%;transform:scaleX(0.9000);">$79.10</span>
<span class="t" id="t77" style="top:288.50px;font-size:12px;color:#0000ff;text-decoration:underline;right:57.60px;transform-origin:100% 50%;transform:scaleX(0.9100);-webkit-text-stroke:0.2px #0000ff;">$0.00</span>
<span class="t" id="t78" style="top:307.50px;font-size:12px;color:#000;left:308.00px;transform-origin:0 50%;transform:scaleX(0.8992);">VCH00091411</span>
<span class="t" id="t79" style="top:307.50px;font-size:12px;color:#000;left:427.60px;transform-origin:0 50%;transform:scaleX(0.8633);">2019-04-04</span>
<span class="t" id="t80" style="top:307.50px;font-size:12px;color:#000;right:188.70px;transform-origin:100% 50%;transform:scaleX(0.9000);">$262.16</span>
<span class="t" id="t81" style="top:307.50px;font-size:12px;color:#0000ff;text-decoration:underline;right:57.60px;transform-origin:100% 50%;transform:scaleX(0.9100);-webkit-text-stroke:0.2px #0000ff;">$0.00</span>
<span class="t" id="t82" style="top:326.50px;font-size:12px;color:#000;left:308.00px;transform-origin:0 50%;transform:scaleX(0.8891);">VCH00103989</span>
<span class="t" id="t83" style="top:326.50px;font-size:12px;color:#000;left:427.60px;transform-origin:0 50%;transform:scaleX(0.8633);">2019-05-15</span>
<span class="t" id="t84" style="top:326.50px;font-size:12px;color:#000;right:188.70px;transform-origin:100% 50%;transform:scaleX(0.9000);">$201.60</span>
<span class="t" id="t85" style="top:326.50px;font-size:12px;color:#0000ff;text-decoration:underline;right:57.60px;transform-origin:100% 50%;transform:scaleX(0.9100);-webkit-text-stroke:0.2px #0000ff;">$0.00</span>
<span class="t" id="t86" style="top:345.50px;font-size:12px;color:#000;left:308.00px;transform-origin:0 50%;transform:scaleX(0.8992);">VCH00114261</span>
<span class="t" id="t87" style="top:345.50px;font-size:12px;color:#000;left:427.60px;transform-origin:0 50%;transform:scaleX(0.8633);">2019-06-18</span>
<span class="t" id="t88" style="top:345.50px;font-size:12px;color:#000;right:188.70px;transform-origin:100% 50%;transform:scaleX(0.9000);">$121.00</span>
<span class="t" id="t89" style="top:345.50px;font-size:12px;color:#0000ff;text-decoration:underline;right:57.60px;transform-origin:100% 50%;transform:scaleX(0.9100);-webkit-text-stroke:0.2px #0000ff;">$0.00</span>
<span class="t" id="t90" style="top:364.50px;font-size:12px;color:#000;left:308.00px;transform-origin:0 50%;transform:scaleX(0.8992);">VCH00114753</span>
<span class="t" id="t91" style="top:364.50px;font-size:12px;color:#000;left:427.60px;transform-origin:0 50%;transform:scaleX(0.8633);">2019-06-18</span>
<span class="t" id="t92" style="top:364.50px;font-size:12px;color:#000;right:188.70px;transform-origin:100% 50%;transform:scaleX(0.9000);">$56.35</span>
<span class="t" id="t93" style="top:364.50px;font-size:12px;color:#0000ff;text-decoration:underline;right:57.60px;transform-origin:100% 50%;transform:scaleX(0.9100);-webkit-text-stroke:0.2px #0000ff;">$0.00</span>
<span class="t" id="t94" style="top:383.50px;font-size:12px;color:#000;left:308.00px;transform-origin:0 50%;transform:scaleX(0.8992);">VCH00114754</span>
<span class="t" id="t95" style="top:383.50px;font-size:12px;color:#000;left:427.60px;transform-origin:0 50%;transform:scaleX(0.8633);">2019-06-18</span>
<span class="t" id="t96" style="top:383.50px;font-size:12px;color:#000;right:188.70px;transform-origin:100% 50%;transform:scaleX(0.9000);">$183.60</span>
<span class="t" id="t97" style="top:383.50px;font-size:12px;color:#0000ff;text-decoration:underline;right:57.60px;transform-origin:100% 50%;transform:scaleX(0.9100);-webkit-text-stroke:0.2px #0000ff;">$0.00</span>
<span class="t" id="t98" style="top:402.50px;font-size:12px;color:#000;left:308.00px;transform-origin:0 50%;transform:scaleX(0.8992);">VCH00114755</span>
<span class="t" id="t99" style="top:402.50px;font-size:12px;color:#000;left:427.60px;transform-origin:0 50%;transform:scaleX(0.8633);">2019-06-18</span>
<span class="t" id="t100" style="top:402.50px;font-size:12px;color:#000;right:188.70px;transform-origin:100% 50%;transform:scaleX(0.9000);">$80.90</span>
<span class="t" id="t101" style="top:402.50px;font-size:12px;color:#0000ff;text-decoration:underline;right:57.60px;transform-origin:100% 50%;transform:scaleX(0.9100);-webkit-text-stroke:0.2px #0000ff;">$0.00</span>
<span class="t" id="t102" style="top:421.50px;font-size:12px;color:#000;left:308.00px;transform-origin:0 50%;transform:scaleX(0.8992);">VCH00114756</span>
<span class="t" id="t103" style="top:421.50px;font-size:12px;color:#000;left:427.60px;transform-origin:0 50%;transform:scaleX(0.8633);">2019-06-18</span>
<span class="t" id="t104" style="top:421.50px;font-size:12px;color:#000;right:188.70px;transform-origin:100% 50%;transform:scaleX(0.9000);">$90.40</span>
<span class="t" id="t105" style="top:421.50px;font-size:12px;color:#0000ff;text-decoration:underline;right:57.60px;transform-origin:100% 50%;transform:scaleX(0.9100);-webkit-text-stroke:0.2px #0000ff;">$0.00</span>
<span class="t" id="t106" style="top:440.50px;font-size:12px;color:#000;left:308.00px;transform-origin:0 50%;transform:scaleX(0.8992);">VCH00114757</span>
<span class="t" id="t107" style="top:440.50px;font-size:12px;color:#000;left:427.60px;transform-origin:0 50%;transform:scaleX(0.8633);">2019-06-18</span>
<span class="t" id="t108" style="top:440.50px;font-size:12px;color:#000;right:188.70px;transform-origin:100% 50%;transform:scaleX(0.9000);">$67.80</span>
<span class="t" id="t109" style="top:440.50px;font-size:12px;color:#0000ff;text-decoration:underline;right:57.60px;transform-origin:100% 50%;transform:scaleX(0.9100);-webkit-text-stroke:0.2px #0000ff;">$0.00</span>
<span class="t" id="t110" style="top:459.50px;font-size:12px;color:#000;left:308.00px;transform-origin:0 50%;transform:scaleX(0.8992);">VCH00116934</span>
<span class="t" id="t111" style="top:459.50px;font-size:12px;color:#000;left:427.60px;transform-origin:0 50%;transform:scaleX(0.8633);">2019-06-26</span>
<span class="t" id="t112" style="top:459.50px;font-size:12px;color:#000;right:188.70px;transform-origin:100% 50%;transform:scaleX(0.9000);">$144.08</span>
<span class="t" id="t113" style="top:459.50px;font-size:12px;color:#0000ff;text-decoration:underline;right:57.60px;transform-origin:100% 50%;transform:scaleX(0.9100);-webkit-text-stroke:0.2px #0000ff;">$0.00</span>
<span class="t" id="t114" style="top:478.50px;font-size:12px;color:#000;left:308.00px;transform-origin:0 50%;transform:scaleX(0.8992);">VCH00116935</span>
<span class="t" id="t115" style="top:478.50px;font-size:12px;color:#000;left:427.60px;transform-origin:0 50%;transform:scaleX(0.8633);">2019-06-26</span>
<span class="t" id="t116" style="top:478.50px;font-size:12px;color:#000;right:188.70px;transform-origin:100% 50%;transform:scaleX(0.9000);">$122.94</span>
<span class="t" id="t117" style="top:478.50px;font-size:12px;color:#0000ff;text-decoration:underline;right:57.60px;transform-origin:100% 50%;transform:scaleX(0.9100);-webkit-text-stroke:0.2px #0000ff;">$0.00</span>
<span class="t" id="t118" style="top:269.00px;font-size:12px;color:#000;left:307.00px;transform-origin:0 50%;transform:scaleX(0.8884);">Voucher Number</span>
<span class="t" id="t119" style="top:269.00px;font-size:12px;color:#000;left:427.00px;transform-origin:0 50%;transform:scaleX(0.8875);">Due Date</span>
<span class="t" id="t120" style="top:269.00px;font-size:12px;color:#000;left:495.00px;transform-origin:0 50%;transform:scaleX(0.8818);">Amount Remaining</span>
<span class="t" id="t121" style="top:269.00px;font-size:12px;color:#000;left:593.80px;transform-origin:0 50%;transform:scaleX(0.8760);">Amount Paid</span>
<span class="t" id="t122" style="top:504.00px;font-size:12px;color:#000;left:313.50px;transform-origin:0 50%;transform:scaleX(0.8814);">Indicates that a credit document is applied.</span>
<span class="t" id="t123" style="top:534.40px;font-size:12px;color:#000;left:586.40px;transform-origin:0 50%;transform:scaleX(0.8717);">Edit Che<u>q</u>ue</span>
<span class="t" id="t124" style="top:534.40px;font-size:12px;color:#000;left:696.50px;transform-origin:0 50%;transform:scaleX(0.8692);">P<u>r</u>ocess</span>
</div>
</body></html>
